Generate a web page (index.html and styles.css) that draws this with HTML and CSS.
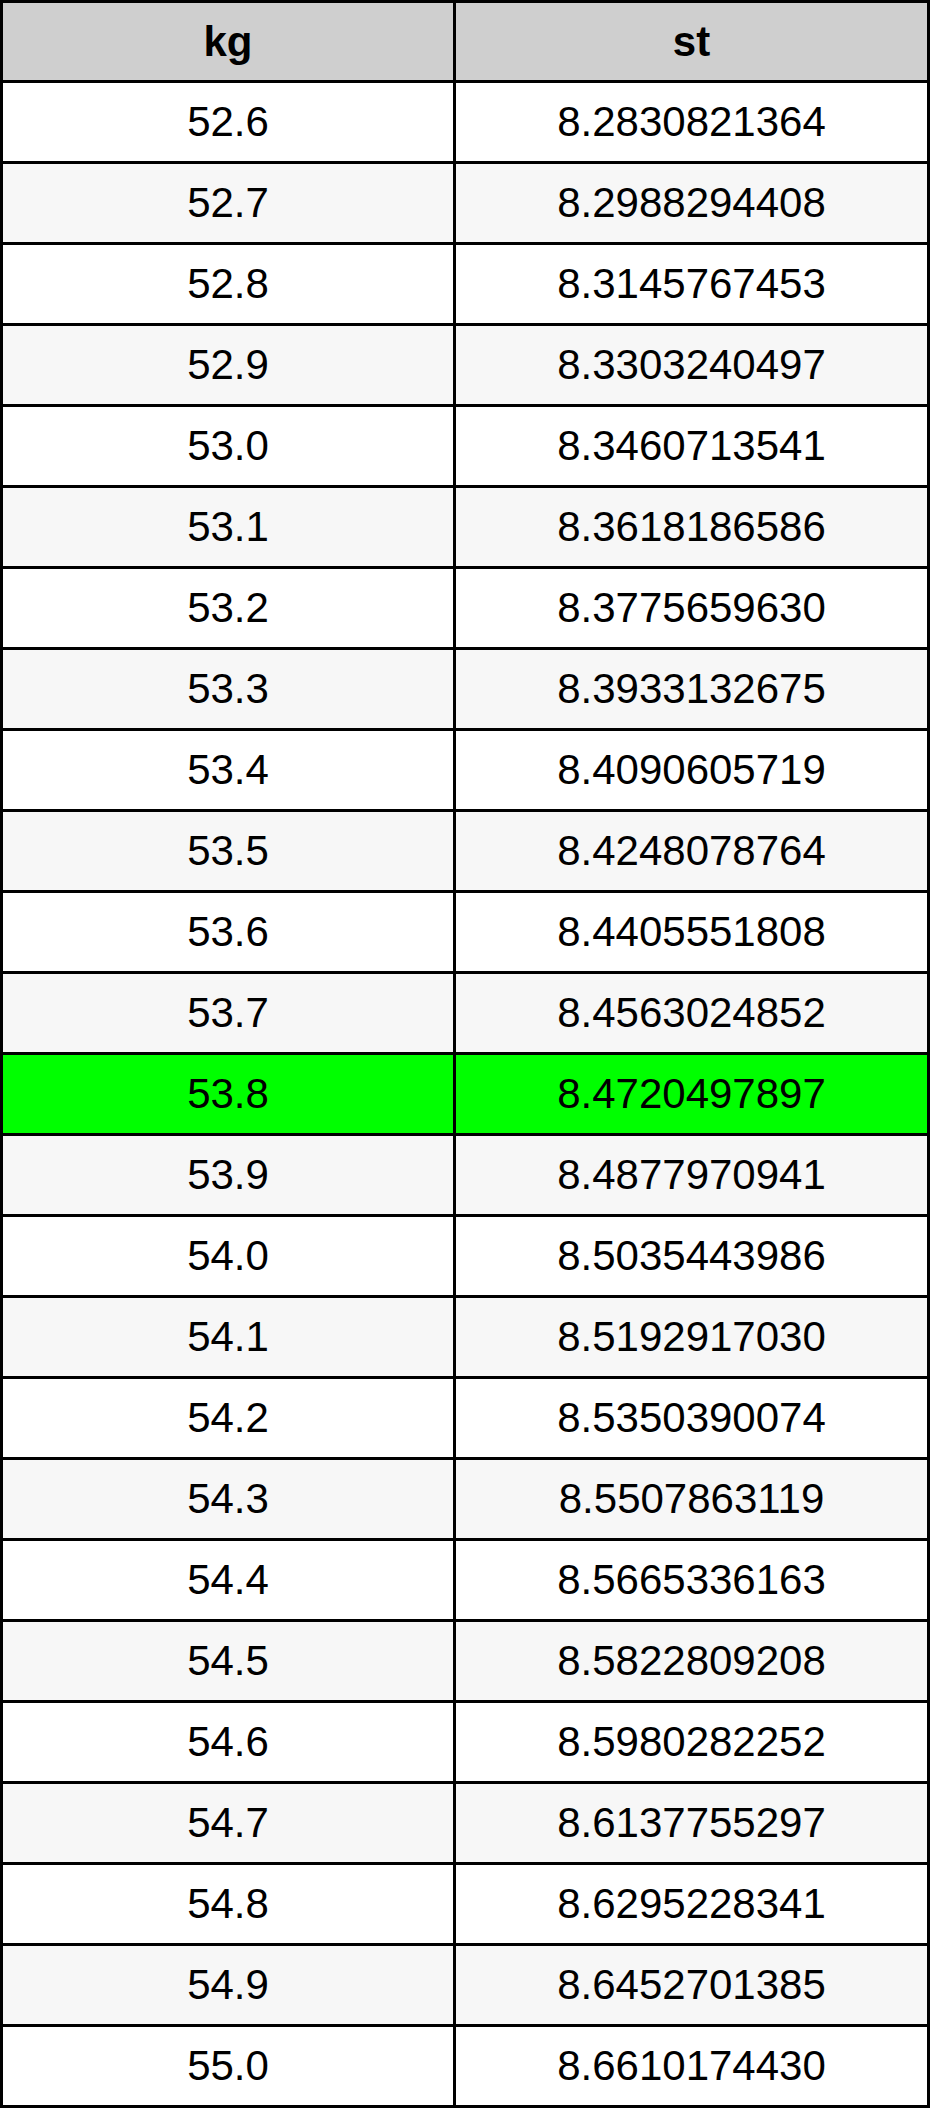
FILE: index.html
```html
<!DOCTYPE html>
<html>
<head>
<meta charset="utf-8">
<link rel="stylesheet" href="styles.css">
</head>
<body>
<table class="conv">
<thead>
<tr><th class="c1">kg</th><th class="c2">st</th></tr>
</thead>
<tbody>
<tr><td class="c1">52.6</td><td class="c2">8.2830821364</td></tr>
<tr class="alt"><td class="c1">52.7</td><td class="c2">8.2988294408</td></tr>
<tr><td class="c1">52.8</td><td class="c2">8.3145767453</td></tr>
<tr class="alt"><td class="c1">52.9</td><td class="c2">8.3303240497</td></tr>
<tr><td class="c1">53.0</td><td class="c2">8.3460713541</td></tr>
<tr class="alt"><td class="c1">53.1</td><td class="c2">8.3618186586</td></tr>
<tr><td class="c1">53.2</td><td class="c2">8.3775659630</td></tr>
<tr class="alt"><td class="c1">53.3</td><td class="c2">8.3933132675</td></tr>
<tr><td class="c1">53.4</td><td class="c2">8.4090605719</td></tr>
<tr class="alt"><td class="c1">53.5</td><td class="c2">8.4248078764</td></tr>
<tr><td class="c1">53.6</td><td class="c2">8.4405551808</td></tr>
<tr class="alt"><td class="c1">53.7</td><td class="c2">8.4563024852</td></tr>
<tr class="hl"><td class="c1">53.8</td><td class="c2">8.4720497897</td></tr>
<tr class="alt"><td class="c1">53.9</td><td class="c2">8.4877970941</td></tr>
<tr><td class="c1">54.0</td><td class="c2">8.5035443986</td></tr>
<tr class="alt"><td class="c1">54.1</td><td class="c2">8.5192917030</td></tr>
<tr><td class="c1">54.2</td><td class="c2">8.5350390074</td></tr>
<tr class="alt"><td class="c1">54.3</td><td class="c2">8.5507863119</td></tr>
<tr><td class="c1">54.4</td><td class="c2">8.5665336163</td></tr>
<tr class="alt"><td class="c1">54.5</td><td class="c2">8.5822809208</td></tr>
<tr><td class="c1">54.6</td><td class="c2">8.5980282252</td></tr>
<tr class="alt"><td class="c1">54.7</td><td class="c2">8.6137755297</td></tr>
<tr><td class="c1">54.8</td><td class="c2">8.6295228341</td></tr>
<tr class="alt"><td class="c1">54.9</td><td class="c2">8.6452701385</td></tr>
<tr><td class="c1">55.0</td><td class="c2">8.6610174430</td></tr>
</tbody>
</table>
</body>
</html>
```

FILE: styles.css
```css
html, body {
  margin: 0;
  padding: 0;
  background: #ffffff;
}

.conv {
  box-sizing: border-box;
  width: 930px;
  table-layout: fixed;
  border-collapse: separate;
  border-spacing: 0;
  border-left: 3px solid #000;
  border-top: 3px solid #000;
  font-family: "Liberation Sans", Arial, sans-serif;
  font-size: 42px;
  color: #000;
}

.conv th,
.conv td {
  box-sizing: border-box;
  padding: 0;
  border-right: 3px solid #000;
  border-bottom: 3px solid #000;
  text-align: center;
  vertical-align: middle;
  line-height: 48px;
}

.conv .c1 {
  width: 453px;
}

.conv .c2 {
  width: 474px;
}

.conv th {
  height: 80px;
  background: #cfcfcf;
  font-weight: bold;
}

.conv td {
  height: 81px;
  background: #ffffff;
}

.conv tr.alt td {
  background: #f7f7f7;
}

.conv tr.hl td {
  background: #00ff00;
}
```
